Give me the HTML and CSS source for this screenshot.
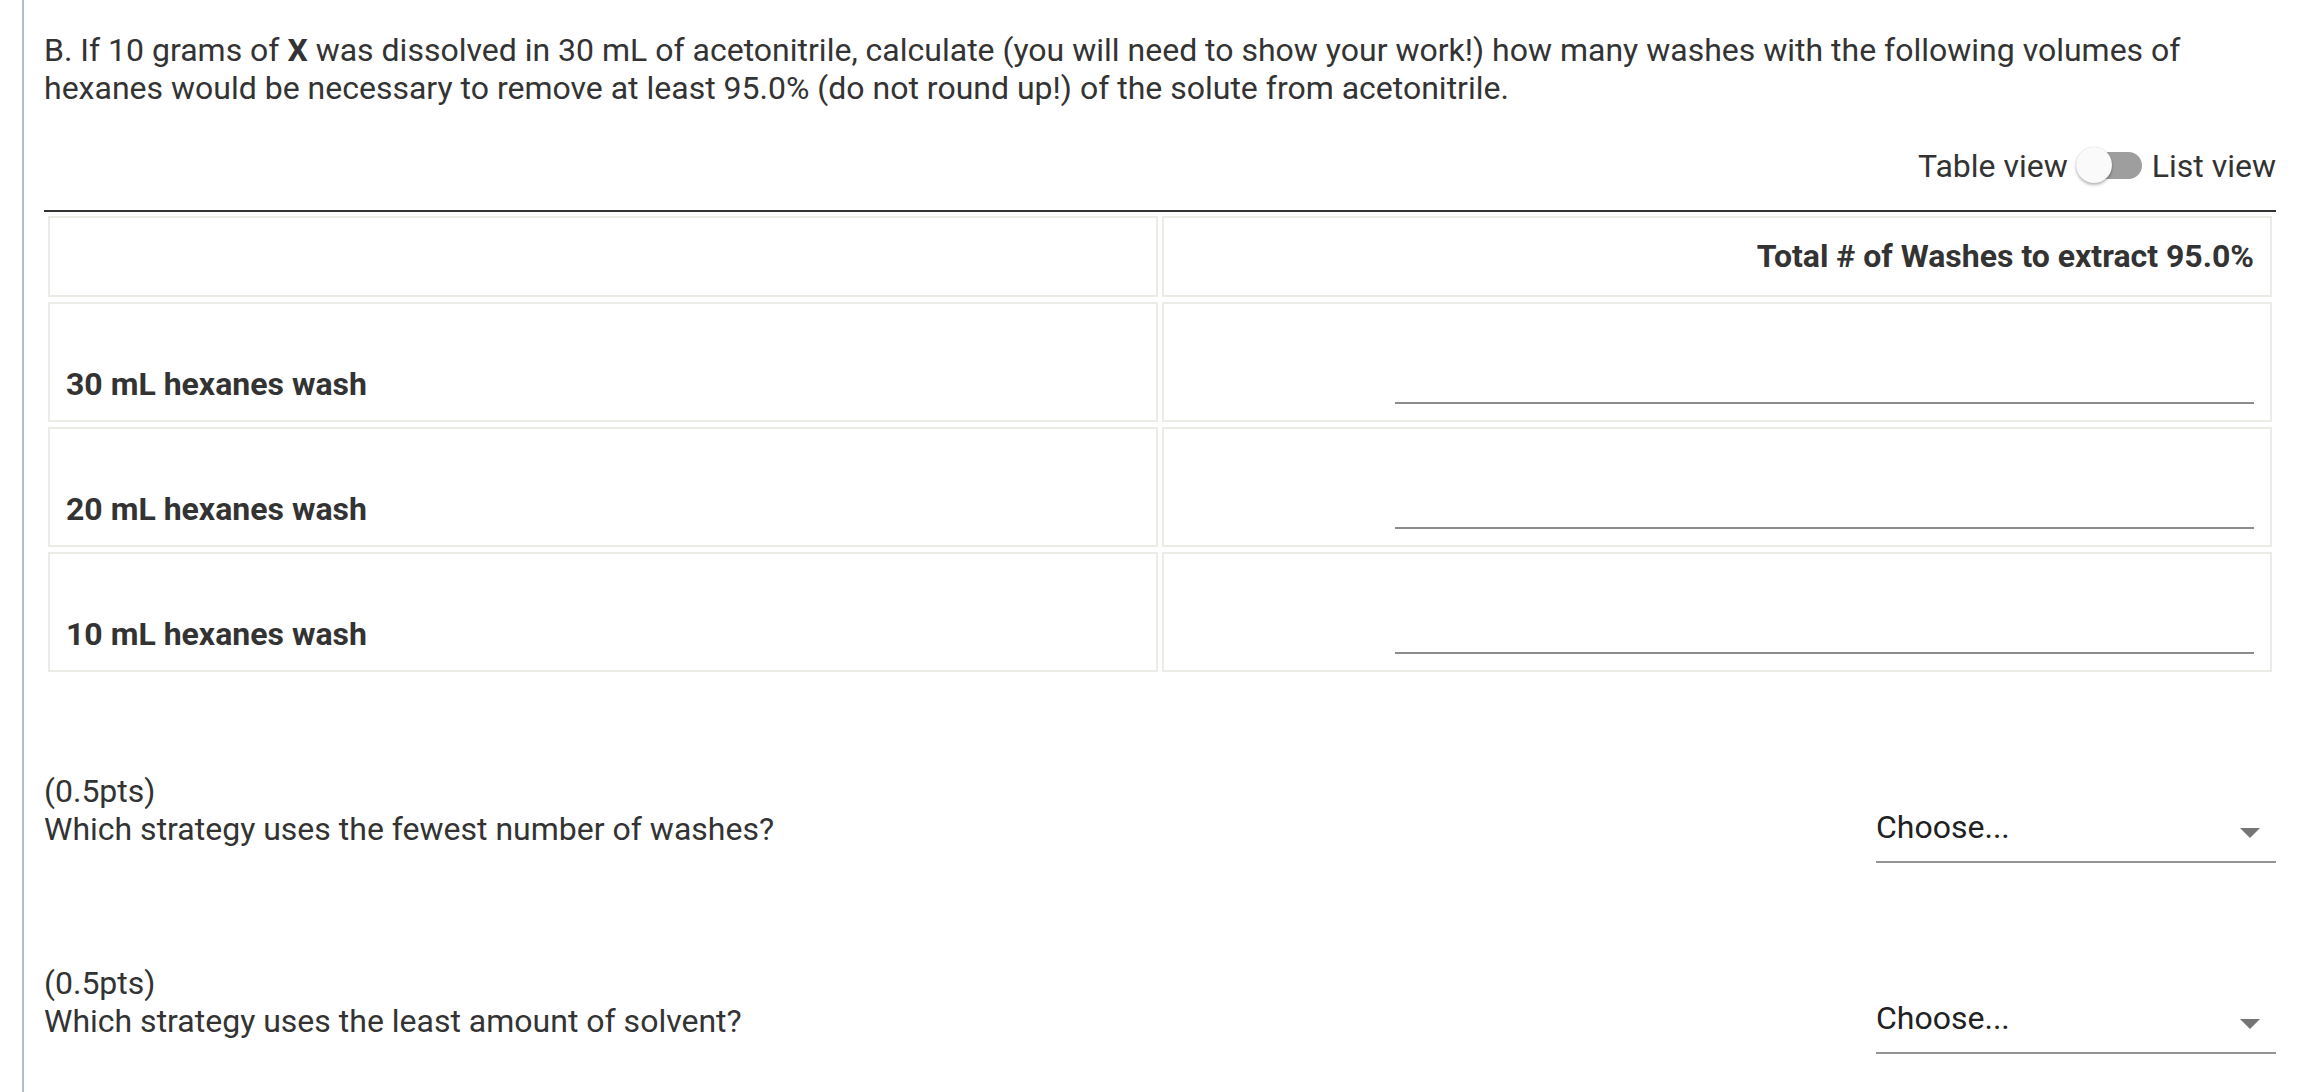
FILE: index.html
```html
<!DOCTYPE html>
<html lang="en">
<head>
<meta charset="utf-8">
<title>Extraction question</title>
<link rel="stylesheet" href="styles.css">
</head>
<body>
<main class="page">
  <p class="question">B. If 10 grams of <b>X</b> was dissolved in 30 mL of acetonitrile, calculate (you will need to show your work!) how many washes with the following volumes of hexanes would be necessary to remove at least 95.0% (do not round up!) of the solute from acetonitrile.</p>

  <div class="view-toggle">
    <span class="toggle-label">Table view</span>
    <span class="switch" role="switch" aria-checked="false">
      <span class="switch-track"></span>
      <span class="switch-knob"></span>
    </span>
    <span class="toggle-label">List view</span>
  </div>

  <div class="table-wrap">
    <table class="answer-table">
      <thead>
        <tr>
          <th class="head-cell"></th>
          <th class="head-cell head-right">Total # of Washes to extract 95.0%</th>
        </tr>
      </thead>
      <tbody>
        <tr>
          <th class="row-label">30 mL hexanes wash</th>
          <td class="input-cell"><div class="text-input"></div></td>
        </tr>
        <tr>
          <th class="row-label">20 mL hexanes wash</th>
          <td class="input-cell"><div class="text-input"></div></td>
        </tr>
        <tr>
          <th class="row-label">10 mL hexanes wash</th>
          <td class="input-cell"><div class="text-input"></div></td>
        </tr>
      </tbody>
    </table>
  </div>

  <section class="choice-block first">
    <div class="prompt">
      <div>(0.5pts)</div>
      <div>Which strategy uses the fewest number of washes?</div>
    </div>
    <div class="select">
      <span class="select-text">Choose...</span>
      <span class="select-arrow"></span>
    </div>
  </section>

  <section class="choice-block second">
    <div class="prompt">
      <div>(0.5pts)</div>
      <div>Which strategy uses the least amount of solvent?</div>
    </div>
    <div class="select">
      <span class="select-text">Choose...</span>
      <span class="select-arrow"></span>
    </div>
  </section>
</main>
</body>
</html>
```

FILE: styles.css
```css
html, body {
  margin: 0;
  padding: 0;
  background: #ffffff;
}

body {
  font-family: Roboto, "Liberation Sans", sans-serif;
  font-size: 32px;
  line-height: 38.4px;
  color: #333333;
  overflow: hidden;
}

.page {
  margin-left: 22px;
  border-left: 2px solid #b0bec5;
  padding: 31px 44px 40px 20px;
  min-height: 1092px;
  box-sizing: border-box;
}

.question {
  margin: 0;
}

.question b {
  font-weight: 700;
}

.view-toggle {
  margin-top: 39px;
  display: flex;
  justify-content: flex-end;
  align-items: center;
  height: 38px;
}

.toggle-label {
  color: #333333;
}

.switch {
  position: relative;
  width: 66px;
  height: 36px;
  margin: 0 10px 0 8px;
}

.switch-track {
  position: absolute;
  left: 6px;
  right: 0;
  top: 4px;
  height: 27px;
  border-radius: 14px;
  background: #9e9e9e;
}

.switch-knob {
  position: absolute;
  left: 0;
  top: -1px;
  width: 36px;
  height: 36px;
  border-radius: 50%;
  background: #fafafa;
  box-shadow: 0 2px 3px rgba(0, 0, 0, 0.28), 0 0 1px rgba(0, 0, 0, 0.2);
}

.table-wrap {
  margin-top: 25px;
  border-top: 2px solid #333333;
}

.answer-table {
  width: 100%;
  border-collapse: separate;
  border-spacing: 4px 5px;
  margin-top: -1px;
  table-layout: fixed;
}

.answer-table th,
.answer-table td {
  border: 2px solid #ecece6;
  padding: 16px;
  font-weight: 700;
  color: #333333;
  text-align: left;
}

.head-cell {
  height: 45px;
  line-height: 45px;
  vertical-align: middle;
}

.answer-table .head-right {
  text-align: right;
}

.row-label {
  height: 84px;
  vertical-align: bottom;
}

.input-cell {
  height: 84px;
  vertical-align: bottom;
}

.text-input {
  width: 80%;
  margin-left: auto;
  height: 40px;
  border-bottom: 2px solid #8c8c8c;
}

.choice-block {
  display: flex;
  justify-content: space-between;
  align-items: flex-end;
}

.choice-block.first {
  margin-top: 95px;
}

.choice-block.second {
  margin-top: 101px;
}

.prompt {
  margin-bottom: 14px;
  color: #333333;
}

.select {
  width: 400px;
  display: flex;
  justify-content: space-between;
  align-items: center;
  padding-bottom: 15px;
  border-bottom: 2px solid #949494;
  line-height: 38px;
}

.select-text {
  color: #212121;
}

.select-arrow {
  width: 0;
  height: 0;
  border-left: 10px solid transparent;
  border-right: 10px solid transparent;
  border-top: 10px solid #757575;
  margin-top: 12px;
  margin-right: 16px;
}
```
